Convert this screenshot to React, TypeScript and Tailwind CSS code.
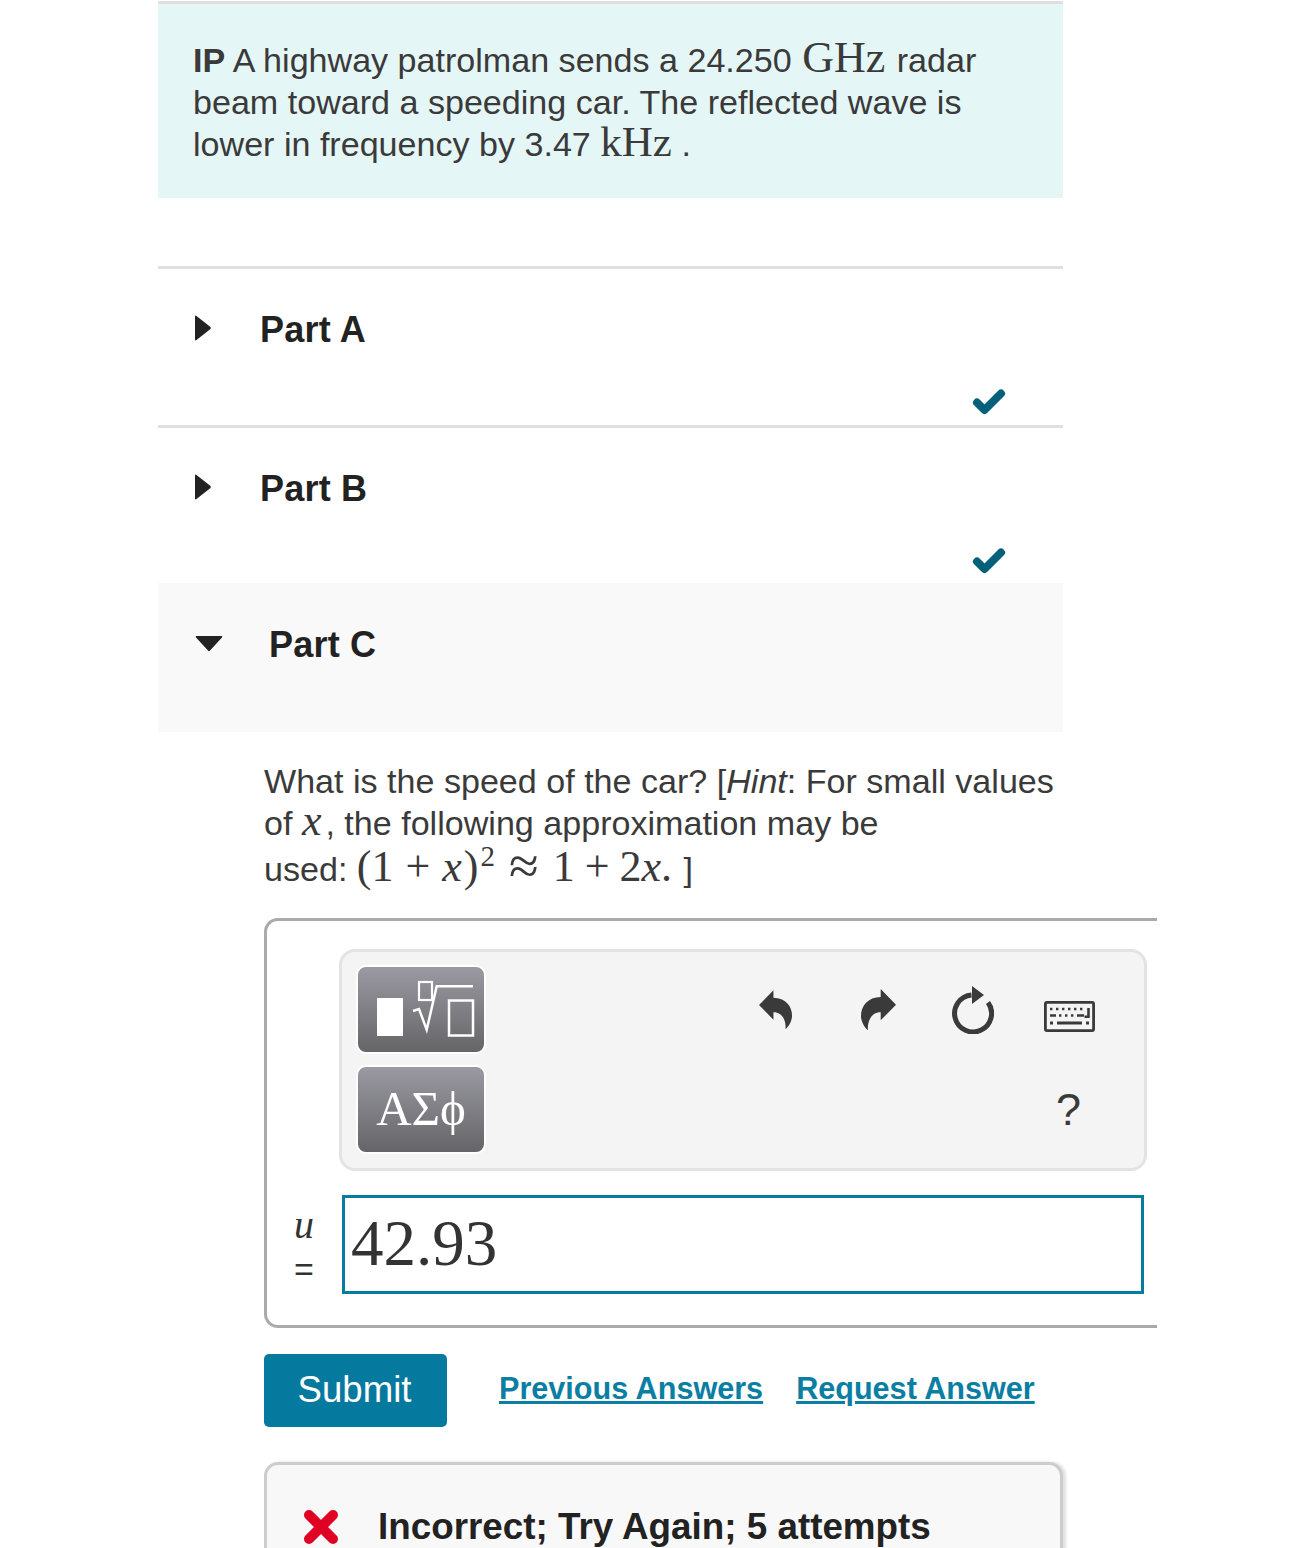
const serif = "font-['Liberation_Serif',serif]";

function Caret({ open }: { open?: boolean }) {
  return open ? (
    <svg width="28" height="18" viewBox="0 0 28 18" className="block">
      <path d="M1.5 1H26.5Q28 1 27 2.5L15 15.5Q14 17 13 15.5L1 2.5Q0 1 1.5 1Z" fill="#222" />
    </svg>
  ) : (
    <svg width="16" height="26" viewBox="0 0 16 26" className="block -mt-[4px]">
      <path d="M0 1.5Q0 0 1.5 1L15.5 12Q16 13 15.5 14L1.5 25Q0 26 0 24.5Z" fill="#222" />
    </svg>
  );
}

function Check() {
  return (
    <svg width="34" height="28" viewBox="0 0 34 28" className="block">
      <path d="M5 14.5L12.5 22L29 5.5" fill="none" stroke="#03607a" strokeWidth="8" strokeLinecap="round" strokeLinejoin="round" />
    </svg>
  );
}

function PartRow({ name }: { name: string }) {
  return (
    <div className="h-[155px] relative flex flex-col">
      <div className="flex items-center pl-[37px] pt-[41px]">
        <Caret />
        <span className="ml-[49px] text-[36px] leading-[40px] font-bold text-[#222] tracking-[0.2px]">{name}</span>
      </div>
      <div className="mt-auto ml-[814px] mb-[8px]">
        <Check />
      </div>
    </div>
  );
}

function Undo({ flip }: { flip?: boolean }) {
  return (
    <svg width="36" height="43" viewBox="0 0 36 43" className={flip ? "block -scale-x-100" : "block"}>
      <path d="M0 15.7L15.3 0V8C28 8 35 17 35 27C35 32 32 38 28 41.3C29 33 25 23 15.3 23.3V31.3Z" fill="#3a3a3a" />
    </svg>
  );
}

function Reset() {
  return (
    <svg width="42" height="48" viewBox="0 0 42 48" className="block">
      <path d="M19.5 9A18.5 18.5 0 1 0 36 16.5" fill="none" stroke="#3a3a3a" strokeWidth="5" />
      <path d="M20 0L32 9L20 18Z" fill="#3a3a3a" />
    </svg>
  );
}

function Keyboard() {
  return (
    <svg width="51" height="31" viewBox="0 0 51 31" className="block">
      <rect x="1.4" y="1.4" width="48.2" height="28.2" rx="1.5" fill="none" stroke="#3a3a3a" strokeWidth="2.8" />
      <path d="M6 8h2.4M12 8h2.4M18 8h2.4M24 8h2.4M30 8h2.4M36 8h2.4" stroke="#3a3a3a" strokeWidth="2.6" />
      <path d="M6 14.5h6M15 14.5h2.4M21 14.5h2.4M27 14.5h2.4M33 14.5h7M44.5 7v8.8h-4" fill="none" stroke="#3a3a3a" strokeWidth="2.6" />
      <path d="M6 22h3M13 22h25M42 22h3" stroke="#3a3a3a" strokeWidth="2.8" />
    </svg>
  );
}

function TemplateIcon() {
  return (
    <svg viewBox="0 0 126 85" className="block w-full h-full">
      <rect x="19" y="31" width="26" height="38" fill="#fff" />
      <rect x="61" y="15" width="13" height="18" fill="none" stroke="#fff" strokeWidth="2.2" />
      <path d="M55 44L61 42L68.7 62.7L78.7 19.3H115" fill="none" stroke="#fff" strokeWidth="2.5" />
      <rect x="91" y="33.5" width="24" height="35" fill="none" stroke="#fff" strokeWidth="2.5" />
    </svg>
  );
}

const toolBtn =
  "w-[130px] h-[89px] rounded-[10px] border-2 border-white bg-gradient-to-b from-[#9b9aa3] to-[#656568] flex items-center justify-center text-white";

export default function App() {
  return (
    <div className="w-[1290px] h-[1548px] overflow-hidden bg-white pt-px font-['Liberation_Sans',Arial,sans-serif] text-[#3a3a3a]">
      <div className="ml-[158px] w-[905px]">
        <div className="h-[197px] border-t-[3px] border-[#e0e0e0] bg-[#e5f6f6] pl-[35px] pt-[35px] text-[34.1px] leading-[42px] whitespace-nowrap">
          <div className="h-[42px]">
            <b>IP</b> A highway patrolman sends a 24.250 <span className={`${serif} text-[44px] leading-[0px] ml-[1px] mr-[2px]`}>GHz</span> radar
          </div>
          <div className="h-[42px]">beam toward a speeding car. The reflected wave is</div>
          <div className="h-[42px]">
            lower in frequency by 3.47 <span className={`${serif} text-[43px] leading-[0px]`}>kHz</span> .
          </div>
        </div>

        <div className="mt-[68px] border-t-[3px] border-[#e0e0e0]">
          <PartRow name="Part A" />
        </div>
        <div className="mt-px border-t-[3px] border-[#e0e0e0]">
          <PartRow name="Part B" />
        </div>

        <div className="h-[149px] bg-[#f9f9f9] pl-[37px] pt-[42px] flex items-start">
          <span className="mt-[10px]"><Caret open /></span>
          <span className="ml-[46px] text-[36px] leading-[40px] font-bold text-[#222] tracking-[0.2px]">Part C</span>
        </div>

        <div className="pl-[106px] pt-[28px]">
          <div className="text-[34.1px] leading-[42px] whitespace-nowrap">
            <div className="h-[42px]">
              What is the speed of the car? [<i>Hint</i>: For small values
            </div>
            <div className="h-[42px]">
              of <i className={`${serif} text-[44px] leading-[0px] mr-[4px]`}>x</i>, the following approximation may be
            </div>
            <div className="h-[46px] pt-[4px]">
              used:{" "}
              <span className={`${serif} text-[44px] leading-[0px] [word-spacing:1px]`}>
                (1 + <i>x</i>
                <span className="ml-[2px]">)</span>
                <sup className="text-[29px] leading-[0px] -top-[15px] ml-[2px]">2</sup>{" "}
                <span className="relative top-[3px] text-[54px] leading-[0px] ml-[2px] mr-[2px]">≈</span>{" "}
                <span className="[word-spacing:-1px]">1 + 2<i>x</i></span>.
              </span>{" "}
              <span className="ml-[2px]">]</span>
            </div>
          </div>

          <div className="mt-[28px] w-[893px] h-[410px] rounded-l-[14px] border-[3px] border-r-0 border-[#aaaaaa] pl-[72px] pt-[28px]">
            <div className="w-[808px] h-[222px] rounded-[16px] border-[3px] border-[#e3e3e3] bg-[#f4f4f4] pl-[14px] pt-[13px] flex">
              <div className="flex flex-col gap-[11px]">
                <div className={toolBtn}>
                  <TemplateIcon />
                </div>
                <div className={`${toolBtn} ${serif} text-[49px] leading-none pb-[3px]`}>ΑΣϕ</div>
              </div>
              <div className="ml-[273px] w-[336px]">
                <div className="flex items-start pt-[24px]">
                  <Undo />
                  <span className="ml-[67px]"><Undo flip /></span>
                  <span className="ml-[56px] -mt-[3px]"><Reset /></span>
                  <span className="ml-[50px] mt-[12px]"><Keyboard /></span>
                </div>
                <div className="mt-[51px] ml-[297px] text-[45px] leading-[50px] text-[#3a3a3a]">?</div>
              </div>
            </div>

            <div className="mt-[24px] flex items-start">
              <div className="-ml-[47px] w-[24px] mr-[26px] pt-[11px] text-center text-[#333] leading-none">
                <div className={`${serif} italic text-[40px] leading-[38px]`}>u</div>
                <div className="text-[34px] leading-[36px] mt-[7px]">=</div>
              </div>
              <div className={`w-[802px] h-[99px] border-[3px] border-[#0a7ba0] pl-[6px] ${serif} text-[65px] leading-[90px] text-[#333]`}>
                42.93
              </div>
            </div>
          </div>

          <div className="mt-[26px] flex items-start">
            <button className="w-[183px] h-[73px] rounded-[5px] bg-[#05799e] text-white text-[36.6px] pr-[2px]">Submit</button>
            <a className="ml-[52px] mt-[14px] text-[30.6px] leading-[40px] font-bold text-[#0a7ea3] underline">Previous Answers</a>
            <a className="ml-[33px] mt-[14px] text-[30.6px] leading-[40px] font-bold text-[#0a7ea3] underline">Request Answer</a>
          </div>

          <div className="mt-[35px] w-[799px] h-[120px] rounded-[14px] border-[3px] border-[#cccccc] bg-[#f8f8f8] shadow-[3px_0_3px_rgba(0,0,0,0.12)] pl-[36px] pt-[40px] flex items-start">
            <svg width="36" height="36" viewBox="0 0 36 36" className="block mt-[4px]">
              <path d="M6 6L30 30M30 6L6 30" stroke="#df0024" strokeWidth="10" strokeLinecap="round" />
            </svg>
            <span className="ml-[39px] text-[36.8px] leading-[44px] font-bold text-[#222] whitespace-nowrap">Incorrect; Try Again; 5 attempts</span>
          </div>
        </div>
      </div>
    </div>
  );
}
